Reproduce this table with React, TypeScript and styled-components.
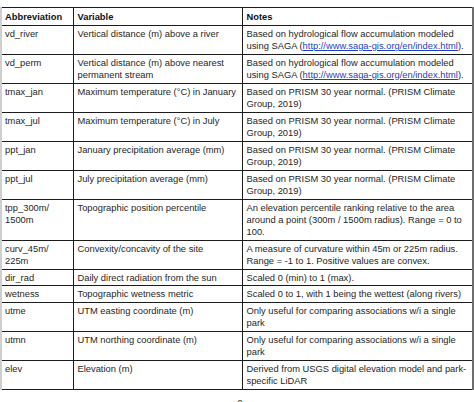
import React from "react";
import styled, { createGlobalStyle } from "styled-components";

const GlobalStyle = createGlobalStyle`
  html, body {
    margin: 0;
    padding: 0;
    background: #ffffff;
  }
  body {
    font-family: "Liberation Sans", Arial, sans-serif;
    overflow: hidden;
  }
`;

const Page = styled.div`
  width: 474px;
  height: 402px;
  padding-top: 7px;
  box-sizing: border-box;
  overflow: hidden;
  display: flex;
  flex-direction: column;
`;

const Table = styled.table`
  border-collapse: collapse;
  table-layout: fixed;
  width: 472px;
  font-family: "Liberation Sans", Arial, sans-serif;
  font-size: 9.35px;
  line-height: 12px;
  color: #262626;
`;

const HeadCell = styled.th`
  text-align: left;
  font-weight: bold;
  color: #111111;
  padding: 2.5px 4px 2.5px 4px;
  border: 1px solid #1c1c1c;
  vertical-align: top;
  &:first-child {
    border-left: 2px solid #cfcfcf;
    padding-left: 3px;
  }
  &:last-child {
    border-right: 2px solid #6e6e6e;
  }
`;

const Cell = styled.td`
  padding: 2px 4px 1.95px 4px;
  border: 1px solid #1c1c1c;
  vertical-align: top;
  &:first-child {
    border-left: 2px solid #cfcfcf;
    padding-left: 3px;
  }
  &:last-child {
    border-right: 2px solid #6e6e6e;
  }
`;

const Line = styled.span`
  display: block;
  white-space: nowrap;
`;

const Link = styled.span`
  color: #1f3fc4;
  text-decoration: underline;
`;

const PageNumber = styled.div`
  margin-top: 7px;
  width: 474px;
  text-align: center;
  font-family: "Liberation Sans", Arial, sans-serif;
  font-size: 9.35px;
  line-height: 12px;
  color: #333333;
  padding-left: 6px;
  box-sizing: border-box;
`;

type Content = React.ReactNode[];

interface RowData {
  abbr: string[];
  variable: string[];
  notes: Content;
}

const sagaLink: Content = [
  "Based on hydrological flow accumulation modeled",
  <>
    using SAGA (<Link>http://www.saga-gis.org/en/index.html</Link>).
  </>,
];

const prism: Content = ["Based on PRISM 30 year normal. (PRISM Climate", "Group, 2019)"];

const singlePark: Content = ["Only useful for comparing associations w/i a single", "park"];

const rows: RowData[] = [
  { abbr: ["vd_river"], variable: ["Vertical distance (m) above a river"], notes: sagaLink },
  {
    abbr: ["vd_perm"],
    variable: ["Vertical distance (m) above nearest", "permanent stream"],
    notes: sagaLink,
  },
  { abbr: ["tmax_jan"], variable: ["Maximum temperature (°C) in January"], notes: prism },
  { abbr: ["tmax_jul"], variable: ["Maximum temperature (°C) in July"], notes: prism },
  { abbr: ["ppt_jan"], variable: ["January precipitation average (mm)"], notes: prism },
  { abbr: ["ppt_jul"], variable: ["July precipitation average (mm)"], notes: prism },
  {
    abbr: ["tpp_300m/", "1500m"],
    variable: ["Topographic position percentile"],
    notes: [
      "An elevation percentile ranking relative to the area",
      "around a point (300m / 1500m radius). Range = 0 to",
      "100.",
    ],
  },
  {
    abbr: ["curv_45m/", "225m"],
    variable: ["Convexity/concavity of the site"],
    notes: [
      "A measure of curvature within 45m or 225m radius.",
      "Range = -1 to 1. Positive values are convex.",
    ],
  },
  {
    abbr: ["dir_rad"],
    variable: ["Daily direct radiation from the sun"],
    notes: ["Scaled 0 (min) to 1 (max)."],
  },
  {
    abbr: ["wetness"],
    variable: ["Topographic wetness metric"],
    notes: ["Scaled 0 to 1, with 1 being the wettest (along rivers)"],
  },
  { abbr: ["utme"], variable: ["UTM easting coordinate (m)"], notes: singlePark },
  { abbr: ["utmn"], variable: ["UTM northing coordinate (m)"], notes: singlePark },
  {
    abbr: ["elev"],
    variable: ["Elevation (m)"],
    notes: ["Derived from USGS digital elevation model and park-", "specific LiDAR"],
  },
];

const Lines: React.FC<{ items: Content }> = ({ items }) => (
  <>
    {items.map((item, i) => (
      <Line key={i}>{item}</Line>
    ))}
  </>
);

export default function App() {
  return (
    <>
      <GlobalStyle />
      <Page>
        <Table>
          <colgroup>
            <col style={{ width: 72 }} />
            <col style={{ width: 169 }} />
            <col style={{ width: 231 }} />
          </colgroup>
          <thead>
            <tr>
              <HeadCell>Abbreviation</HeadCell>
              <HeadCell>Variable</HeadCell>
              <HeadCell>Notes</HeadCell>
            </tr>
          </thead>
          <tbody>
            {rows.map((row) => (
              <tr key={row.abbr.join("")}>
                <Cell>
                  <Lines items={row.abbr} />
                </Cell>
                <Cell>
                  <Lines items={row.variable} />
                </Cell>
                <Cell>
                  <Lines items={row.notes} />
                </Cell>
              </tr>
            ))}
          </tbody>
        </Table>
        <PageNumber>9</PageNumber>
      </Page>
    </>
  );
}
